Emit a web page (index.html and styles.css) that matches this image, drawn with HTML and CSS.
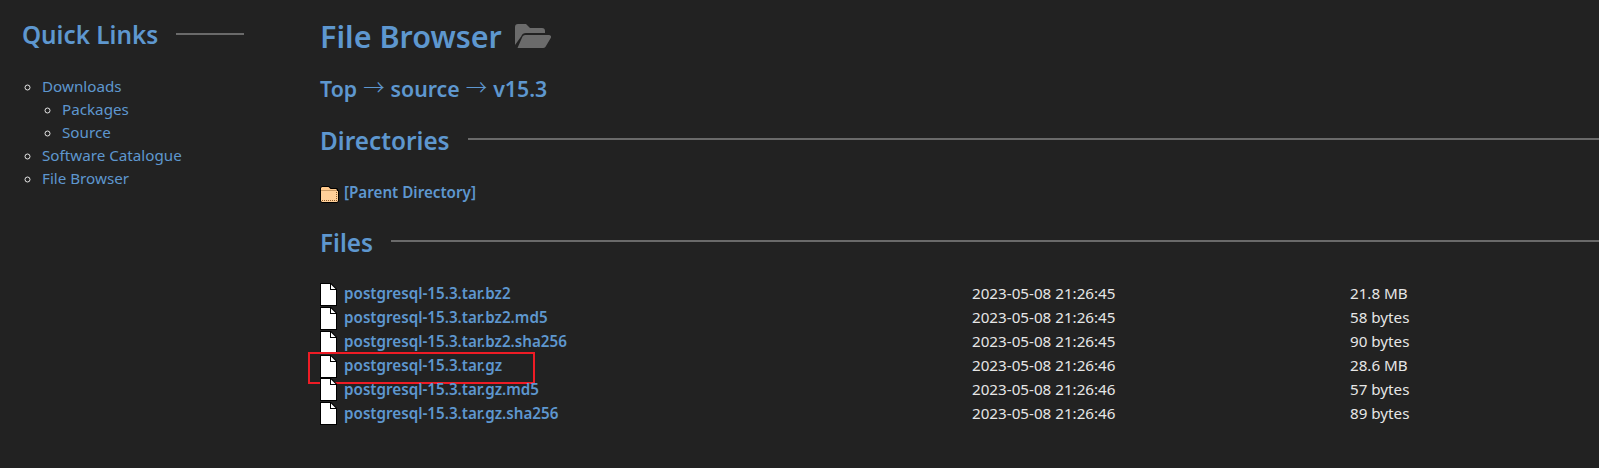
FILE: index.html
```html
<!DOCTYPE html>
<html lang="en">
<head>
<meta charset="utf-8">
<title>File Browser</title>
<link rel="stylesheet" href="styles.css">
</head>
<body>
<div class="page">
  <aside class="sidebar">
    <h2 class="rule-heading quick">Quick Links</h2>
    <ul class="nav">
      <li><a href="#">Downloads</a>
        <ul>
          <li><a href="#">Packages</a></li>
          <li><a href="#">Source</a></li>
        </ul>
      </li>
      <li><a href="#">Software Catalogue</a></li>
      <li><a href="#">File Browser</a></li>
    </ul>
  </aside>
  <main class="main">
    <h1 class="title">File Browser
      <svg class="title-icon" viewBox="0 0 36 24" aria-hidden="true"><path fill="#6b6b6b" d="M0 3a3 3 0 0 1 3-3h8l4 4h12a3 3 0 0 1 3 3v2H11a5 5 0 0 0-4.700 3.200L0 21Z"/><path fill="#6b6b6b" d="M10 11h24a2 2 0 0 1 1.900 2.700L31 22a3 3 0 0 1-2.700 2H2.500l5-11.500A3 3 0 0 1 10 11Z"/></svg>
    </h1>
    <h3 class="crumbs"><a href="#">Top</a> <span class="arrow">→</span> <a href="#">source</a> <span class="arrow">→</span> <a href="#">v15.3</a></h3>
    <h2 class="rule-heading dirs">Directories</h2>
    <div class="parent">
      <svg class="folder" viewBox="0 0 19 17" aria-hidden="true"><path fill="#000" d="M2 0h7l2 2h6l1 1v1l1 1v10l-2 2H2l-2-2V2Z"/><path fill="#ffc98c" d="M2 1h6.500l2 2H16l1 1H1V2Z"/><path fill="#c99a66" d="M1 4h16v1H1z"/><path fill="#ffcf99" d="M1 5h17v10l-1 1H2l-1-1Z"/><path fill="#8a5c2c" d="M2 14h1v1H2zm2 0h1v1H4zm2 0h1v1H6zm2 0h1v1H8zm2 0h1v1h-1zm2 0h1v1h-1zm2 0h1v1h-1zm2 0h1v1h-1zM16 6h1v1h-1zm0 2h1v1h-1zm0 2h1v1h-1zm0 2h1v1h-1z"/></svg>
      <a href="#" class="file-link">[Parent Directory]</a>
    </div>
    <h2 class="rule-heading files-heading">Files</h2>
    <div class="files">
      <div class="row"><span class="name"><svg class="doc" viewBox="0 0 17 23" aria-hidden="true"><path fill="#000" d="M0 0h11l6 6v17H0Z"/><path fill="#fff" d="M1 1h9v6h6v15H1Z"/><path fill="#fff" d="M11 1.500 15.500 6H11Z"/></svg><a href="#" class="file-link">postgresql-15.3.tar.bz2</a></span><span class="date">2023-05-08 21:26:45</span><span>21.8 MB</span></div>
      <div class="row"><span class="name"><svg class="doc" viewBox="0 0 17 23" aria-hidden="true"><path fill="#000" d="M0 0h11l6 6v17H0Z"/><path fill="#fff" d="M1 1h9v6h6v15H1Z"/><path fill="#fff" d="M11 1.500 15.500 6H11Z"/></svg><a href="#" class="file-link">postgresql-15.3.tar.bz2.md5</a></span><span class="date">2023-05-08 21:26:45</span><span>58 bytes</span></div>
      <div class="row"><span class="name"><svg class="doc" viewBox="0 0 17 23" aria-hidden="true"><path fill="#000" d="M0 0h11l6 6v17H0Z"/><path fill="#fff" d="M1 1h9v6h6v15H1Z"/><path fill="#fff" d="M11 1.500 15.500 6H11Z"/></svg><a href="#" class="file-link">postgresql-15.3.tar.bz2.sha256</a></span><span class="date">2023-05-08 21:26:45</span><span>90 bytes</span></div>
      <div class="row highlighted"><span class="name"><svg class="doc" viewBox="0 0 17 23" aria-hidden="true"><path fill="#000" d="M0 0h11l6 6v17H0Z"/><path fill="#fff" d="M1 1h9v6h6v15H1Z"/><path fill="#fff" d="M11 1.500 15.500 6H11Z"/></svg><a href="#" class="file-link">postgresql-15.3.tar.gz</a></span><span class="date">2023-05-08 21:26:46</span><span>28.6 MB</span><div class="red-box"></div></div>
      <div class="row"><span class="name"><svg class="doc" viewBox="0 0 17 23" aria-hidden="true"><path fill="#000" d="M0 0h11l6 6v17H0Z"/><path fill="#fff" d="M1 1h9v6h6v15H1Z"/><path fill="#fff" d="M11 1.500 15.500 6H11Z"/></svg><a href="#" class="file-link">postgresql-15.3.tar.gz.md5</a></span><span class="date">2023-05-08 21:26:46</span><span>57 bytes</span></div>
      <div class="row"><span class="name"><svg class="doc" viewBox="0 0 17 23" aria-hidden="true"><path fill="#000" d="M0 0h11l6 6v17H0Z"/><path fill="#fff" d="M1 1h9v6h6v15H1Z"/><path fill="#fff" d="M11 1.500 15.500 6H11Z"/></svg><a href="#" class="file-link">postgresql-15.3.tar.gz.sha256</a></span><span class="date">2023-05-08 21:26:46</span><span>89 bytes</span></div>
    </div>
  </main>
</div>
</body>
</html>
```

FILE: styles.css
```css
html, body { margin: 0; padding: 0; height: 100%; overflow: hidden; }
body { background: #222222; color: #e6e6e6; font-family: "Noto Sans", "Open Sans", sans-serif; font-size: 15.200px; line-height: 23.900px; }
a { color: #5e97cf; text-decoration: none; }
.page { display: flex; height: 468px; }
.sidebar { width: 222px; margin-left: 22px; flex: none; padding-top: 18px; }
.main { margin-left: 76px; flex: 1; min-width: 0; padding-top: 15px; }
.rule-heading { display: flex; align-items: center; margin: 0; font-weight: 600; color: #5e97cf; font-size: 24.300px; line-height: 34px; white-space: nowrap; }
.rule-heading::after { content: ""; flex: 1; height: 2px; background: #6a6a6a; margin-left: 18px; margin-top: -4px; }
.quick::after { margin-top: -2px; }
.nav { list-style: circle; margin: 23px 0 0; padding: 0 0 0 20px; line-height: 23px; }
.nav ul { list-style: circle; margin: 0; padding: 0 0 0 20px; }
.title { margin: 0; font-size: 30.500px; line-height: 42px; font-weight: 600; color: #5e97cf; display: flex; align-items: center; }
.title-icon { width: 36px; height: 24px; margin-left: 13px; }
.crumbs { margin: 17px 0 0; font-size: 21.300px; line-height: 30px; font-weight: 600; }
.arrow { color: #5e97cf; font-family: "Noto Sans CJK JP", sans-serif; font-weight: 300; margin: 0 0.500px; vertical-align: 2px; line-height: 1; }
.dirs { margin-top: 20px; }
.parent { display: flex; align-items: center; margin-top: 23px; height: 24px; }
.folder { width: 19px; height: 17px; margin-right: 5px; margin-top: 2px; }
.file-link { font-weight: 600; }
.files-heading { margin-top: 21px; }
.files { margin-top: 22.400px; }
.row { display: grid; grid-template-columns: 652px 378px 1fr; height: 23.900px; align-items: center; position: relative; }
.name { display: flex; align-items: center; height: 23.900px; }
.doc { width: 17px; height: 23px; margin-right: 7px; flex: none; }
.red-box { position: absolute; left: -12px; top: -2px; width: 223px; height: 28px; border: 2px solid #ee1c25; }
```
